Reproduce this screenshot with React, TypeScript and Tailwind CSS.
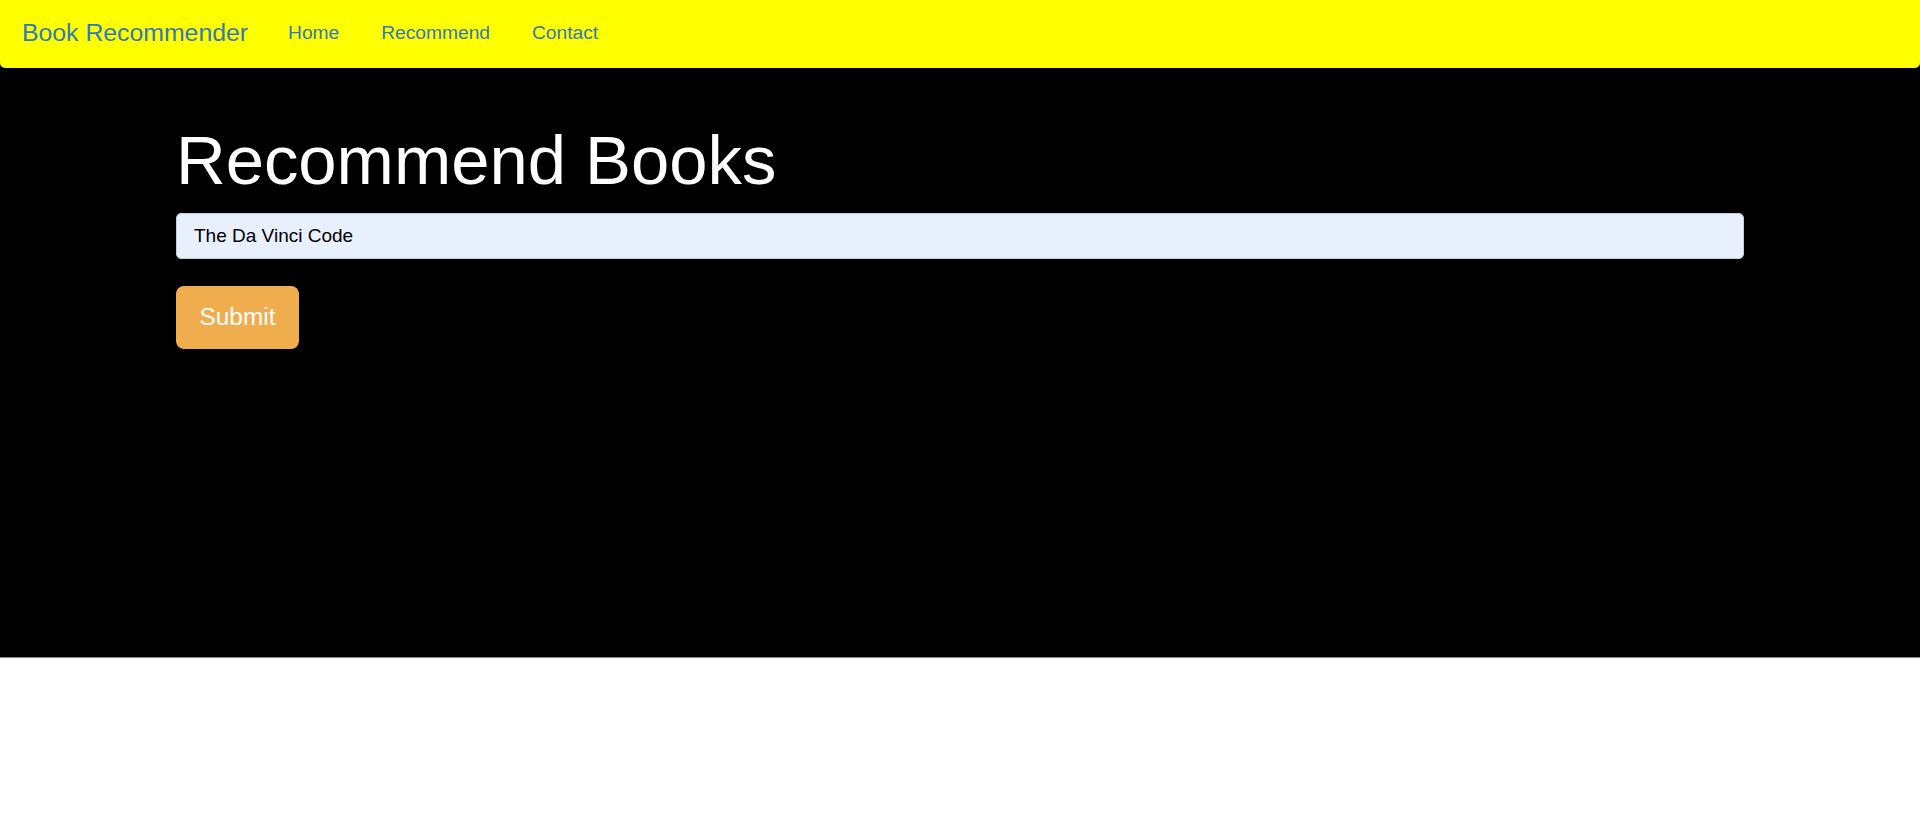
import { useState } from "react";

const links = ["Home", "Recommend", "Contact"];

export default function App() {
  const [title, setTitle] = useState("The Da Vinci Code");

  return (
    <div className="min-h-screen bg-white font-['Liberation_Sans',Arial,sans-serif]">
      <div className="h-[658px] border-b border-[#8a8a8a] bg-black">
        <nav className="flex h-[67.5px] items-center rounded-b-[5px] bg-[#ffff00]">
          <a href="#" className="pl-[22px] pr-[19px] text-[24.8px] leading-none text-[#337ab7]">
            Book Recommender
          </a>
          {links.map((l) => (
            <a key={l} href="#" className="-mt-[2px] px-[21px] text-[19.2px] leading-none text-[#337ab7]">
              {l}
            </a>
          ))}
        </nav>

        <div className="mx-auto w-[1568px] pt-[55.5px]">
          <h1 className="mb-[14px] text-[68.8px] leading-[1.1] text-white">Recommend Books</h1>
          <form onSubmit={(e) => e.preventDefault()} className="flex flex-col items-start">
            <input
              value={title}
              onChange={(e) => setTitle(e.target.value)}
              className="h-[46px] w-full rounded-[5px] border border-[#c8ccd2] bg-[#e8f0fe] px-[17px] text-[19px] text-black outline-none"
            />
            <button
              type="submit"
              className="mt-[27px] flex h-[63px] w-[123px] items-center justify-center rounded-[8px] bg-[#f0ad4e] text-[24.4px] text-white"
            >
              Submit
            </button>
          </form>
        </div>
      </div>
    </div>
  );
}
